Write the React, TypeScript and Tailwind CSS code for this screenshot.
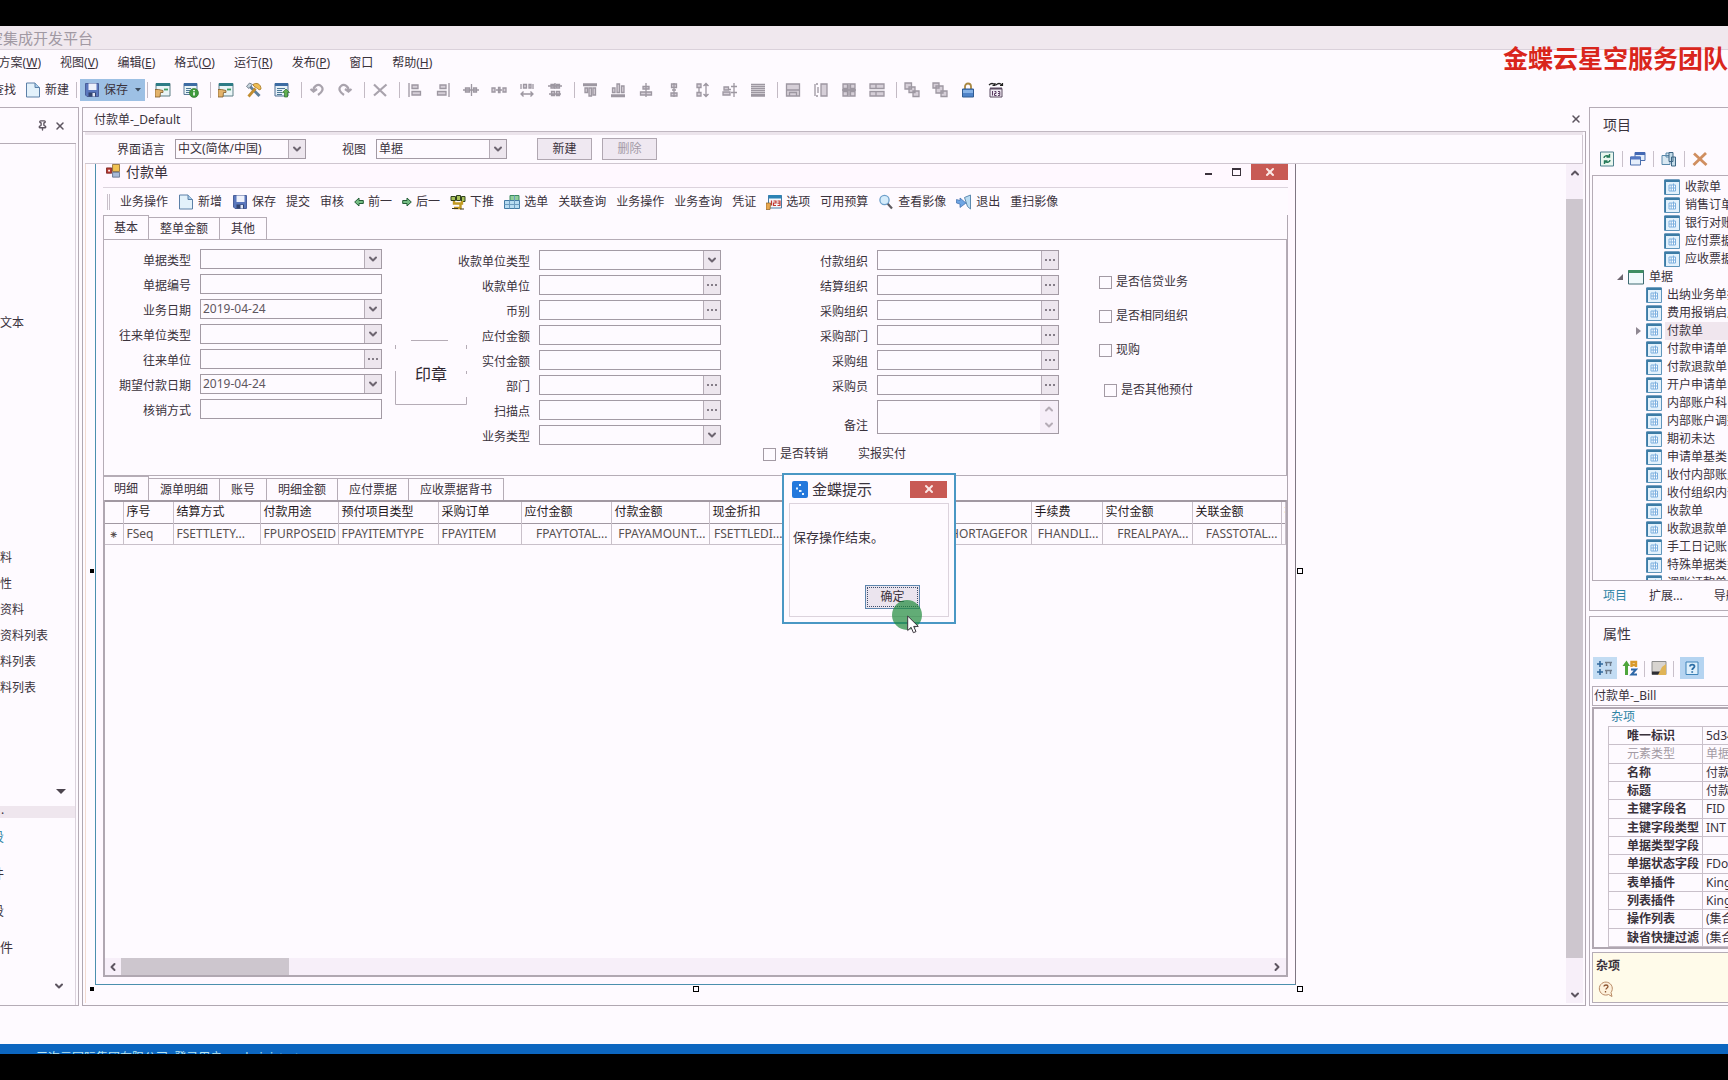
import type { ReactNode } from 'react'
import { ChevronDown, ChevronLeft, ChevronRight, ChevronUp, Pin, X } from 'lucide-react'
import clsx from 'clsx'

const FONT = "font-['Noto_Sans','Noto_Sans_CJK_SC',sans-serif]"

/* ---------- icons ---------- */

function Svg({ children, size = 16 }: { children: ReactNode; size?: number }) {
  return (
    <svg width={size} height={size} viewBox="0 0 16 16" fill="none" className="shrink-0" aria-hidden="true">
      {children}
    </svg>
  )
}

const NewIcon = () => (
  <Svg>
    <path d="M1.500 1h8.500l4.500 4.500V15h-13z" fill="#e3f1fb" stroke="#5c80a8" />
    <path d="M10 1v4.500h4.500" fill="#a9cdea" stroke="#5c80a8" />
  </Svg>
)

const SaveIcon = () => (
  <Svg>
    <path d="M1.500 1.500h13v13H3l-1.500-1.500z" fill="#5a77bd" stroke="#4a5f9a" />
    <path d="M4.500 1.500h8V8h-8z" fill="#eef1fb" />
    <path d="M4.500 10.500h7.500V14.500H4.500z" fill="#33446f" />
    <path d="M8.500 11h2.500v3.500H8.500z" fill="#dfe5f4" />
  </Svg>
)

const FormHandIcon = () => (
  <Svg>
    <path d="M1 1.500h14v12.500H1z" fill="#eaf5f7" stroke="#5f7f86" />
    <path d="M1 1h14v3H1z" fill="#2d7c86" />
    <path d="M9 7.500h4" stroke="#3e9d63" strokeWidth="1.800" />
    <path d="M0 7.500h3.500l4.500 1v2H5.500l-.5 4.500H0z" fill="#e3b36b" stroke="#7d5a2c" strokeWidth="0.800" />
  </Svg>
)

const FormInfoIcon = () => (
  <Svg>
    <path d="M1 1.500h13v11H1z" fill="#eaf5f7" stroke="#5c7a9a" />
    <path d="M1 1h13v3H1z" fill="#3d6ca3" />
    <path d="M3 6.500h5M3 8.500h4M3 10.500h4" stroke="#4b7895" />
    <circle cx="11" cy="11" r="4.500" fill="#3f9b3d" stroke="#2b7029" strokeWidth="0.600" />
    <path d="M11 8v1.200M11 10.200v3.300" stroke="#fff" strokeWidth="1.600" />
  </Svg>
)

const FormExportIcon = () => (
  <Svg>
    <path d="M1 1.500h13v12.500H1z" fill="#e6f0f8" stroke="#4f6f92" />
    <path d="M1 1h13v3H1z" fill="#3d6ca3" />
    <path d="M3 6.500h8M3 8.500h5M3 10.500h5M3 12.500h5" stroke="#4b7895" />
    <path d="M12 7l3.500 3.500H13.500V15h-3v-4.500H8.500z" fill="#62b04f" stroke="#2f7030" strokeWidth="0.700" />
  </Svg>
)

const ToolsIcon = () => (
  <Svg>
    <path d="M3 3.500l10.500 10.500" stroke="#5e7f9c" strokeWidth="3" />
    <path d="M.5 4.500L3.500 1l3 1.500-3.500 4z" fill="#c6d3dc" stroke="#5f6f7c" strokeWidth="0.800" />
    <path d="M2.500 14.500L9.500 6.500" stroke="#c28d30" strokeWidth="2.800" />
    <path d="M7 2.500c3.500-2.500 8-.5 8 4.500-1.500 1.500-2.500.5-3.500-.5S7.500 5 7 2.500z" fill="#eebd55" stroke="#a3731e" strokeWidth="0.800" />
  </Svg>
)

const BoxPushIcon = () => (
  <Svg>
    <path d="M1 2.500h4.500v4H1zM6.500 1.500h4v5h-4zM11.500 2.500H15v5h-3.500z" fill="#a9c25a" stroke="#30411f" />
    <path d="M4 7v2.500h8V7M10.500 9v5H4" stroke="#c29a22" strokeWidth="2.400" />
    <path d="M2 14.500h6M10 15h4" stroke="#40381f" />
  </Svg>
)

const PickIcon = () => (
  <Svg>
    <path d="M6 1.500h9v6H6z" fill="#8fce9a" stroke="#3c8a60" />
    <path d="M.5 6.500h15v8H.5z" fill="#b8dcf2" stroke="#447ba5" />
    <path d="M.5 10.500h15M5.500 6.500v8M10.500 1.500v13" stroke="#6d9cc0" />
  </Svg>
)

const OptionIcon = () => (
  <Svg>
    <path d="M2.500 1.500h13v12.500h-13z" fill="#f4f7fb" stroke="#4a7ba5" />
    <path d="M2.500 1h13v3.500h-13z" fill="#2c83b5" />
    <path d="M5.500 6.500v5M7.500 7H10v2H7.500v2.500H10M11.500 7h2.500v4.500h-2.500M11.500 9.200H14" stroke="#c33831" strokeWidth="1.200" />
    <path d="M0 9h4.500v2L4 15.500H0z" fill="#e8a74f" stroke="#8a5f27" strokeWidth="0.700" />
  </Svg>
)

const SearchIcon = () => (
  <Svg>
    <path d="M9.500 9.500L14 14.500" stroke="#5e5a5f" strokeWidth="2.200" />
    <circle cx="6.500" cy="6" r="4.600" fill="#d5ecfb" stroke="#6d9fca" strokeWidth="1.300" />
  </Svg>
)

const ExitIcon = () => (
  <Svg>
    <path d="M8.500 3.500l6-2.500v14l-3-2.500z" fill="#b9dcf3" stroke="#5d8ab0" />
    <path d="M.5 5.500L4 6.500V4l6 5-6 4.500V10L.5 9z" fill="#6ea5e4" stroke="#3c6cab" strokeWidth="0.700" />
  </Svg>
)

const ArrowIcon = ({ flip }: { flip?: boolean }) => (
  <svg width="10" height="12" viewBox="0 0 10 12" className={clsx('shrink-0', flip && 'rotate-180')} aria-hidden="true">
    <path d="M.7 6L5 2v2.500h4.300v3H5V10z" fill="#76bd84" stroke="#235c36" />
  </svg>
)

const FormLogo = () => (
  <svg width="14" height="14" viewBox="0 0 16 16" className="shrink-0" aria-hidden="true">
    <path d="M7.500.5h8v8h-8z" fill="#f1c252" stroke="#8c6a34" />
    <path d="M.5 4.500h6v6h-6z" fill="#b9362f" stroke="#7c2521" />
    <path d="M2.500 6.500h2v2h-2z" fill="#fff" />
    <path d="M7.500 9.500h8v5.500h-8z" fill="#a9bbd8" stroke="#60708c" />
  </svg>
)

const BillIcon = () => (
  <Svg>
    <path d="M.5 1h15v14.500H.5z" fill="#e3f1fc" stroke="#5f95bb" />
    <path d="M.5.500h15v2.500H.5zM.5 1H2v14H.5z" fill="#3c7ba5" />
    <path d="M5 6h6.500v6H5z" fill="#fff" stroke="#7db0e0" />
    <path d="M5 9h6.500M7.200 6v6M9.500 4.500V12" stroke="#7db0e0" />
  </Svg>
)

const WindowIcon = () => (
  <Svg>
    <path d="M.5 1.500h15v13.500H.5z" fill="#f0f9fb" stroke="#3f6a72" />
    <path d="M.5 1h15v3H.5z" fill="#3e8d62" />
  </Svg>
)

const LockIcon = () => (
  <Svg>
    <path d="M5 8V4.500a3 3 0 0 1 6 0V8" stroke="#a98740" strokeWidth="1.800" />
    <path d="M2.500 7h11v8h-11z" fill="#4f83c8" stroke="#315c93" />
    <path d="M3 8h10v3H3z" fill="#86b2e6" />
  </Svg>
)

const CalendarIcon = () => (
  <Svg>
    <path d="M1 3c2-2 4-2 6 0M8 3c2-2 4-2 6 0M7 1v2.500H4.500M14.500 1v2.500H12" stroke="#222" strokeWidth="1.200" />
    <path d="M2 6.500h12v8.500H2z" fill="#efe9f2" stroke="#5a4a60" />
    <path d="M2 5.500h12v2H2z" fill="#5a4a60" />
    <path d="M4.500 9v4.500M6.500 9.500H8v2H6.500v2h2M10 9.500h1.800v4H10M10 11.500h1.800" stroke="#5a3a60" />
  </Svg>
)

// 灰色布局图标,一条 path 一个
const GRAY_GROUPS: string[][] = [
  ['M1.500 7l3 2.500L8 7M4.500 9C4 4 9 1.500 12 4s1.500 6-3 9', 'M14.500 7l-3 2.500L8 7M11.500 9C12 4 7 1.500 4 4s-1.500 6 3 9'],
  ['M2 2.500L14 14M14.500 2.500L2 13.500'],
  [
    'M2 1v14M5 3h6v3.500H5zM5 9.500h8.500V13H5z',
    'M14 1v14M5 3h6v3.500H5zM2.500 9.500H11V13H2.500z',
    'M0 8h16M2.500 6h4v4h-4zM8.500 2v12M10.500 6h3v4h-3z',
    'M1 6h3v4H1zM5 8h6M12 6h3v4h-3zM7.500 5.500h1.500v5H7.500z',
    'M2 2v5M4.500 2.500h3V6h-3zM14 2v5M10 2.500h2V6h-2zM2 12h12M4.500 9.500L2 12l2.500 2.500M11.500 9.500L14 12l-2.500 2.500',
    'M4 2.500h3V6H4zM9.500 2.500h3V6h-3zM8 1v6M1 4h14M2 12h12M4.500 9.500h3v4h-3zM9.500 9.500h3v4h-3z',
  ],
  [
    'M1 2h14M1 3.500h14M3 6h2.500v4.500H3zM7 6h2.500v8H7zM11 6h2.500v7H11z',
    'M1 13h14M1 14.500h14M2.500 6H5v4.500H2.500zM7 2h2.500v8.500H7zM11.500 4H14v6.500h-2.500z',
    'M8 1v14M5 4.500h6V7H5zM2.500 10h11v3h-11z',
    'M8 1v14M5.500 2h5v3.500h-5zM5 11h6v3H5zM6 8h4',
    'M3 2h4v3.500H3zM5 5.500V11M3 10.500h4V14H3zM12 1v14M9.500 4L12 1.500 14.500 4M9.500 12l2.500 2.500 2.500-2.500',
    'M2 5h4.500v3H2zM1 10h7v3H1zM12 1v14M9 4.500h6M9 10.500h6M7 7.500h2',
    'M1 2.500h14M1 4.500h14M1 6.500h14M1 8.500h14M1 10.500h14M1 12.500h14M1 14h14',
  ],
  [
    'M1.500 2h13v12h-13zM1.500 8h13M4.500 14v-3.500h7V14',
    'M3 2h2M3 14h2M2 2v12M8 2h6v12H8zM5 5v6',
    'M2 2h4.500v4.500H2zM9.500 2H14v4.500H9.500zM2 9.500h4.500V14H2zM9.500 9.500H14V14H9.500zM8 1v14M1 8h14',
    'M1 2h14v4.500H1zM1 9.500h14V14H1zM7 2v4.500M7 9.500V14',
  ],
  ['M1 1h6.500v6H1zM5 5h6v5.500H5zM9 9h6v5.500H9z', 'M1 1h6v5H1zM4 4h7v7H4zM9 9h6v5.500H9z'],
]

function GrayIcon({ d }: { d: string }) {
  return (
    <Svg>
      <path d={d} fill="#d6cfd8" stroke="#9d97a1" strokeWidth="1.300" />
    </Svg>
  )
}

/* ---------- shared bits ---------- */

function ToolCell({ children, label }: { children: ReactNode; label: string }) {
  return (
    <button type="button" aria-label={label} className="flex h-6 w-7 shrink-0 items-center justify-center">
      {children}
    </button>
  )
}

const ToolSep = () => <span className="ml-[5px] mr-px h-4 w-px shrink-0 bg-[#c3bac4]" />

type FieldKind = 'text' | 'select' | 'lookup' | 'date'
type FieldDef = { label: string; kind: FieldKind; value?: string }

const BOX = 'flex h-5 shrink-0 border border-[#a39aa4] bg-[#fefaff]'
const ADDON = 'flex w-[17px] shrink-0 items-center justify-center border-l border-[#b5acb6] bg-[#ede6ee] text-[#6d6570]'

function Field({ id, field }: { id: string; field: FieldDef }) {
  const { label, kind, value } = field
  return (
    <div className="flex gap-[9px]">
      <label htmlFor={id} className="flex min-w-0 flex-1 items-end justify-end whitespace-nowrap leading-4">
        {label}
      </label>
      <div className={clsx(BOX, 'w-[182px]')}>
        {kind === 'select' ? (
          <select id={id} className="min-w-0 flex-1 appearance-none bg-transparent px-0.5 outline-none" />
        ) : (
          <input id={id} defaultValue={value} className="min-w-0 flex-1 bg-transparent px-0.5 text-[#5e5660] outline-none" />
        )}
        {(kind === 'select' || kind === 'date') && (
          <span className={ADDON}>
            <ChevronDown size={12} strokeWidth={4} />
          </span>
        )}
        {kind === 'lookup' && (
          <button type="button" aria-label={`选择${label}`} className={ADDON}>
            <span className="flex gap-0.5">
              <i className="size-0.5 bg-[#857d88]" />
              <i className="size-0.5 bg-[#857d88]" />
              <i className="size-0.5 bg-[#857d88]" />
            </span>
          </button>
        )}
      </div>
    </div>
  )
}

function Check({ label }: { label: string }) {
  return (
    <label className="flex h-4 items-center gap-1 whitespace-nowrap">
      <input type="checkbox" className="size-[13px] appearance-none border border-[#a39aa4] bg-[#fefaff]" />
      {label}
    </label>
  )
}

function Tabs({ items }: { items: string[] }) {
  return (
    <div role="tablist" className="flex h-6 items-end">
      {items.map((item, i) => (
        <button
          key={item}
          type="button"
          role="tab"
          aria-selected={i === 0}
          className={clsx(
            'border-r border-t border-[#b5acb6] leading-5',
            i === 0 ? 'h-6 border-l border-l-[#b5acb6] px-2.5' : 'h-[22px] px-[11px]',
          )}
        >
          {item}
        </button>
      ))}
    </div>
  )
}

/* ---------- top bars ---------- */

const MENUS = [
  ['视图', 'V'],
  ['编辑', 'E'],
  ['格式', 'O'],
  ['运行', 'R'],
  ['发布', 'P'],
  ['窗口', ''],
  ['帮助', 'H'],
]

function MenuBar() {
  return (
    <nav className="flex h-[25px] items-center gap-[19px] whitespace-nowrap">
      <button type="button" className="flex w-[41px] justify-end overflow-hidden">
        <span>解决方案(<u>W</u>)</span>
      </button>
      {MENUS.map(([name, key]) => (
        <button key={name} type="button">
          {name}
          {key && <>(<u>{key}</u>)</>}
        </button>
      ))}
    </nav>
  )
}

function MainToolbar() {
  return (
    <div className="flex h-[30px] items-center whitespace-nowrap">
      <button type="button" className="flex w-4 justify-end overflow-hidden">
        <span>查找</span>
      </button>
      <button type="button" className="ml-[9px] flex items-center gap-1">
        <NewIcon />
        新建
      </button>
      <span className="ml-[7px] mr-[3px] h-4 w-px bg-[#c3bac4]" />
      <button type="button" className="flex h-[22px] items-center gap-1 bg-[#9dc0e4] pl-1 pr-px">
        <SaveIcon />
        保存
        <svg width="6" height="4" className="mx-[3px]" aria-hidden="true">
          <path d="M0 0h6L3 3.500z" fill="#3b4a5c" />
        </svg>
      </button>
      <span className="ml-0.5 mr-px h-4 w-px bg-[#c3bac4]" />
      <ToolCell label="表单"><FormHandIcon /></ToolCell>
      <ToolCell label="信息"><FormInfoIcon /></ToolCell>
      <ToolSep />
      <ToolCell label="设计"><FormHandIcon /></ToolCell>
      <ToolCell label="工具"><ToolsIcon /></ToolCell>
      <ToolCell label="导出"><FormExportIcon /></ToolCell>
      {GRAY_GROUPS.map((group, g) => (
        <div key={g} className="flex items-center">
          <ToolSep />
          {group.map((d, i) => (
            <ToolCell key={i} label={`布局 ${g + 1}-${i + 1}`}>
              {g < 2 ? (
                <Svg>
                  <path d={d} stroke="#a9a3ad" strokeWidth="2.200" />
                </Svg>
              ) : (
                <GrayIcon d={d} />
              )}
            </ToolCell>
          ))}
        </div>
      ))}
      <ToolCell label="锁定"><LockIcon /></ToolCell>
      <ToolCell label="顺序"><CalendarIcon /></ToolCell>
    </div>
  )
}

/* ---------- left ---------- */

const TOOLBOX = ['料', '性', '资料', '资料列表', '料列表', '料列表']
const TOOL_GROUPS = ['字段', '控件', '字段']

function LeftPanel() {
  return (
    <aside className="flex w-[79px] shrink-0 flex-col border-b border-r border-t border-[#b5acb6] pr-0.5">
      <div className="flex h-9 items-center justify-end gap-1.5 border-b border-[#b5acb6] pr-2.5 text-[#5d5560]">
        <Pin size={11} strokeWidth={3} />
        <X size={12} strokeWidth={3} />
      </div>
      <div className="flex min-h-0 flex-1 flex-col border-r border-[#dcd3dd]">
        <p className="mt-[166px] leading-[26px]">文本</p>
        <ul className="mt-[209px] leading-[26px]">
          {TOOLBOX.map((t, i) => (
            <li key={i}>{t}</li>
          ))}
        </ul>
        <svg width="10" height="6" className="mb-[11px] ml-[56px] mt-auto shrink-0" aria-hidden="true">
          <path d="M0 0h10L5 5z" fill="#4c444e" />
        </svg>
        <div className="h-3 shrink-0 bg-[#efe6ee] pl-px leading-[8px]">.</div>
        <ul className="text-[13px] leading-[37px]">
          {TOOL_GROUPS.map((t, i) => (
            <li key={i} className={clsx('flex w-1 justify-end overflow-hidden whitespace-nowrap', i === 0 && 'text-[#2d83a3]')}>
              <span>{t}</span>
            </li>
          ))}
          <li>件</li>
        </ul>
        <div className="flex h-[39px] shrink-0 items-center pl-[53px] text-[#5d5560]">
          <ChevronDown size={12} strokeWidth={4} />
        </div>
      </div>
    </aside>
  )
}

/* ---------- bill designer ---------- */

type BillAction = { text: string; icon?: ReactNode }

const BILL_ACTIONS: BillAction[] = [
  { text: '业务操作' },
  { text: '新增', icon: <NewIcon /> },
  { text: '保存', icon: <SaveIcon /> },
  { text: '提交' },
  { text: '审核' },
  { text: '前一', icon: <ArrowIcon /> },
  { text: '后一', icon: <ArrowIcon flip /> },
  { text: '下推', icon: <BoxPushIcon /> },
  { text: '选单', icon: <PickIcon /> },
  { text: '关联查询' },
  { text: '业务操作' },
  { text: '业务查询' },
  { text: '凭证' },
  { text: '选项', icon: <OptionIcon /> },
  { text: '可用预算' },
  { text: '查看影像', icon: <SearchIcon /> },
  { text: '退出', icon: <ExitIcon /> },
  { text: '重扫影像' },
]

const COL1: FieldDef[] = [
  { label: '单据类型', kind: 'select' },
  { label: '单据编号', kind: 'text' },
  { label: '业务日期', kind: 'date', value: '2019-04-24' },
  { label: '往来单位类型', kind: 'select' },
  { label: '往来单位', kind: 'lookup' },
  { label: '期望付款日期', kind: 'date', value: '2019-04-24' },
  { label: '核销方式', kind: 'text' },
]

const COL2: FieldDef[] = [
  { label: '收款单位类型', kind: 'select' },
  { label: '收款单位', kind: 'lookup' },
  { label: '币别', kind: 'lookup' },
  { label: '应付金额', kind: 'text' },
  { label: '实付金额', kind: 'text' },
  { label: '部门', kind: 'lookup' },
  { label: '扫描点', kind: 'lookup' },
  { label: '业务类型', kind: 'select' },
]

const COL3: FieldDef[] = [
  { label: '付款组织', kind: 'lookup' },
  { label: '结算组织', kind: 'lookup' },
  { label: '采购组织', kind: 'lookup' },
  { label: '采购部门', kind: 'lookup' },
  { label: '采购组', kind: 'lookup' },
  { label: '采购员', kind: 'lookup' },
]

function BillForm() {
  return (
    <div className="flex h-[237px] shrink-0 border border-[#b5acb6]">
      <div className="flex w-[278px] flex-col gap-[5px] pt-[9px]">
        {COL1.map((f, i) => (
          <Field key={f.label} id={`base-${i}`} field={f} />
        ))}
      </div>
      <svg width="73" height="66" viewBox="0 0 73 66" className="ml-[13px] mt-[100px]" aria-hidden="true">
        <path d="M16 .5h37M.5 5v4M.5 31v33.500h71V57M71.500 5v4M71.500 31v3" stroke="#b5acb6" fill="none" />
        <text x="36" y="40" textAnchor="middle" fontSize="16" fill="#2e262f">印章</text>
      </svg>
      <div className="flex w-[253px] flex-col gap-[5px] pt-2.5">
        {COL2.map((f, i) => (
          <Field key={f.label} id={`payee-${i}`} field={f} />
        ))}
      </div>
      <div className="flex w-[338px] flex-col gap-[5px] pt-2.5">
        {COL3.map((f, i) => (
          <Field key={f.label} id={`org-${i}`} field={f} />
        ))}
        <div className="flex gap-[9px]">
          <label htmlFor="remark" className="flex flex-1 items-end justify-end leading-4">备注</label>
          <div className="flex h-[34px] w-[182px] border border-[#a39aa4]">
            <textarea id="remark" className="min-w-0 flex-1 resize-none bg-transparent outline-none" />
            <span className="flex w-[18px] flex-col items-center justify-between bg-[#f6eef8] py-0.5 text-[#b5acb6]">
              <ChevronUp size={12} strokeWidth={4} />
              <ChevronDown size={12} strokeWidth={4} />
            </span>
          </div>
        </div>
        <div className="mt-[7px] flex gap-[30px] pl-[42px]">
          <Check label="是否转销" />
          <span className="leading-4">实报实付</span>
        </div>
      </div>
      <div className="flex flex-col gap-[18px] pl-10 pt-[34px]">
        <Check label="是否信贷业务" />
        <Check label="是否相同组织" />
        <Check label="现购" />
        <div className="pl-[5px] pt-1.5">
          <Check label="是否其他预付" />
        </div>
      </div>
    </div>
  )
}

type Column = { title: string; field: string; width: string; right?: boolean }

const COLUMNS: Column[] = [
  { title: '序号', field: 'FSeq', width: 'w-[50px]' },
  { title: '结算方式', field: 'FSETTLETY...', width: 'w-[87px]' },
  { title: '付款用途', field: 'FPURPOSEID', width: 'w-[78px]' },
  { title: '预付项目类型', field: 'FPAYITEMTYPE', width: 'w-[100px]' },
  { title: '采购订单', field: 'FPAYITEM', width: 'w-[83px]' },
  { title: '应付金额', field: 'FPAYTOTAL...', width: 'w-[90px]', right: true },
  { title: '付款金额', field: 'FPAYAMOUNT...', width: 'w-[98px]', right: true },
  { title: '现金折扣', field: 'FSETTLEDI...', width: 'w-[77px]', right: true },
  { title: '折后金额', field: 'FDISCOUNT', width: 'w-[124px]', right: true },
  { title: '长短款', field: 'FSHORTAGEFOR', width: 'w-[121px]', right: true },
  { title: '手续费', field: 'FHANDLI...', width: 'w-[71px]', right: true },
  { title: '实付金额', field: 'FREALPAYA...', width: 'w-[90px]', right: true },
  { title: '关联金额', field: 'FASSTOTAL...', width: 'w-[89px]', right: true },
  { title: '折', field: 'F', width: 'w-auto' },
]

function DetailGrid() {
  return (
    <table className="w-full table-fixed border-collapse border-t-2 border-t-[#a198a2]">
      <thead>
        <tr className="h-[22px] border-b border-[#a198a2] text-left text-[#1f1820]">
          <th className="w-[18px] border-r border-[#c9c0ca]" />
          {COLUMNS.map((c) => (
            <th
              key={c.title}
              className={clsx('overflow-hidden whitespace-nowrap border-r border-[#c9c0ca] p-0 pl-[3px] font-normal', c.width)}
            >
              {c.title}
            </th>
          ))}
        </tr>
      </thead>
      <tbody>
        <tr className="h-[21px] border-b border-[#c9c0ca] text-[#57504f]">
          <td className="border-r border-[#c9c0ca] p-0 text-center">⁕</td>
          {COLUMNS.map((c) => (
            <td
              key={c.title}
              className={clsx(
                'overflow-hidden whitespace-nowrap border-r border-[#c9c0ca] p-0',
                c.right ? 'pr-[3px] text-right' : 'pl-[3px]',
              )}
            >
              {c.field}
            </td>
          ))}
        </tr>
      </tbody>
    </table>
  )
}

function MessageDialog() {
  return (
    <div
      role="dialog"
      aria-label="金蝶提示"
      className="absolute left-[686px] top-[309px] flex h-[151px] w-[174px] flex-col border-2 border-[#4a97c4] bg-[#fefaff] px-[5px] pb-[5px]"
    >
      <div className="flex h-7 shrink-0 items-center pl-[3px] pr-0.5 text-[15px]">
        <svg width="16" height="17" viewBox="0 0 16 17" className="mr-1 shrink-0" aria-hidden="true">
          <rect width="16" height="17" rx="2" fill="#2478dc" />
          <path d="M7 3h2v2H7zM4 6.500h2v2H4zM7 9h2.500v2H7zM10 12h2v2h-2z" fill="#e6f3ff" />
        </svg>
        <span className="flex-1">金蝶提示</span>
        <button type="button" aria-label="关闭" className="flex h-[17px] w-[37px] items-center justify-center bg-[#c85a54] text-[#fbe7e5]">
          <X size={12} strokeWidth={4} />
        </button>
      </div>
      <div className="relative flex flex-1 flex-col border border-[#dcd3dd]">
        <p className="pl-[3px] pt-[25px] text-[13px] leading-4">保存操作结束。</p>
        <button
          type="button"
          className="ml-[75px] mt-10 h-6 w-[55px] border border-[#5e86ae] bg-[#ebe4ee] p-px"
        >
          <span className="flex h-full items-center justify-center border border-dotted border-[#3f4f6c]">确定</span>
        </button>
        <span className="absolute left-[102px] top-[96px] size-[30px] rounded-full bg-[#1f8a3c]/70" />
        <svg width="14" height="20" viewBox="0 0 14 20" className="absolute left-[117px] top-[111px]" aria-hidden="true">
          <path d="M.7 1v14.500l3.400-3.200 2.300 5.400 2.600-1.100-2.300-5.200h4.600z" fill="#fff" stroke="#3a333c" />
        </svg>
      </div>
    </div>
  )
}

const HANDLE = 'absolute size-1.5 border border-black'
const HANDLE_FIXED = 'absolute size-1 bg-black'

function BillWindow() {
  return (
    <div className="relative mb-[18px] ml-[9px] flex min-w-0 flex-1 flex-col border-b border-l border-r border-b-[#4b8fae] border-l-[#4b8fae] border-r-[#7f7682] bg-[#fff8ff] px-[7px] pb-[7px]">
      <div className="flex h-[23px] shrink-0 items-start pl-[3px] leading-4">
        <FormLogo />
        <span className="ml-1.5 flex-1 text-[14px]">付款单</span>
        <button type="button" aria-label="最小化" className="mr-5 mt-[9px] h-0.5 w-[7px] bg-[#3b333c]" />
        <button type="button" aria-label="最大化" className="mr-2.5 mt-1 h-2 w-[9px] border border-t-2 border-[#3b333c]" />
        <button type="button" aria-label="关闭" className="flex h-4 w-[37px] items-center justify-center bg-[#c85a54] text-[#fbe7e5]">
          <X size={12} strokeWidth={4} />
        </button>
      </div>
      <div className="flex h-7 shrink-0 items-center gap-2.5 whitespace-nowrap border-t border-[#dcd3dd] bg-[#fefaff] pl-1">
        <span className="h-4 w-[3px] border-x border-[#c9c0ca]" />
        {BILL_ACTIONS.map((a, i) => (
          <button key={i} type="button" className="flex items-center gap-1">
            {a.icon}
            {a.text}
          </button>
        ))}
      </div>
      <div className="flex min-h-0 flex-1 flex-col border-b-2 border-r border-[#b0a7b1] bg-[#fefaff]">
        <Tabs items={['基本', '整单金额', '其他']} />
        <BillForm />
        <Tabs items={['明细', '源单明细', '账号', '明细金额', '应付票据', '应收票据背书']} />
        <div className="flex min-h-0 flex-1 flex-col border-l-2 border-r border-[#b0a7b1]">
          <DetailGrid />
          <div className="mt-auto flex h-[17px] items-center bg-[#f7eff9] text-[#5d5560]">
            <ChevronLeft size={12} strokeWidth={4} className="mx-[2px] shrink-0" />
            <div className="h-full w-[168px] bg-[#cdc6ce]" />
            <ChevronRight size={12} strokeWidth={4} className="ml-auto mr-[3px]" />
          </div>
        </div>
      </div>
      <MessageDialog />
      <span className={clsx(HANDLE_FIXED, '-left-[6px] top-[405px]')} />
      <span className={clsx(HANDLE_FIXED, '-bottom-[7px] -left-[6px]')} />
      <span className={clsx(HANDLE, '-bottom-[8px] left-1/2 -translate-x-1/2')} />
      <span className={clsx(HANDLE, '-right-[8px] top-[404px]')} />
      <span className={clsx(HANDLE, '-bottom-[8px] -right-[8px]')} />
    </div>
  )
}

function TopSelect({ id, label, value, className }: { id: string; label: string; value: string; className: string }) {
  return (
    <div className="flex items-center gap-2.5">
      <label htmlFor={id} className="pt-0.5">{label}</label>
      <div className={clsx(BOX, className)}>
        <select id={id} defaultValue={value} className="min-w-0 flex-1 appearance-none bg-transparent px-0.5 outline-none">
          <option>{value}</option>
        </select>
        <span className={ADDON}>
          <ChevronDown size={12} strokeWidth={4} />
        </span>
      </div>
    </div>
  )
}

function DocumentArea() {
  return (
    <main className="ml-[3px] flex min-w-0 flex-1 flex-col">
      <div className="flex h-6 shrink-0 items-center">
        <button type="button" className="h-6 border-l border-r border-t border-[#b5acb6] px-[11px]">
          付款单-_Default
        </button>
        <button type="button" aria-label="关闭文档" className="ml-auto mr-1 text-[#5d5560]">
          <X size={12} strokeWidth={3} />
        </button>
      </div>
      <div className="flex min-h-0 flex-1 flex-col border border-[#b0a7b1] border-t-[#c0b7c1] px-0.5 pb-0.5">
        <div className="h-[3px] shrink-0 bg-[#ece4ec]" />
        <div className="flex h-[29px] shrink-0 items-center border-b border-r border-[#cfc6d0] pl-8">
          <TopSelect id="lang" label="界面语言" value="中文(简体/中国)" className="w-[131px]" />
          <div className="ml-9">
            <TopSelect id="view" label="视图" value="单据" className="w-[131px]" />
          </div>
          <button type="button" className="ml-[30px] h-[22px] w-[55px] border border-[#b0a7b1] bg-[#efe8f1]">新建</button>
          <button type="button" disabled className="ml-2.5 h-[22px] w-[55px] border border-[#b0a7b1] bg-[#efe8f1] text-[#a39aa6]">
            删除
          </button>
        </div>
        <div className="flex min-h-0 flex-1 border-l border-[#f3dcd2]">
          <BillWindow />
          <div className="w-[270px] shrink-0" />
          <div className="flex w-[17px] shrink-0 flex-col items-center bg-[#f7eff9] text-[#5d5560]">
            <ChevronUp size={12} strokeWidth={4} className="my-[3px] shrink-0" />
            <div className="mt-[17px] w-full flex-1 bg-[#cdc6ce]" />
            <ChevronDown size={12} strokeWidth={4} className="mb-0.5 mt-[31px] shrink-0" />
          </div>
        </div>
      </div>
    </main>
  )
}

/* ---------- right ---------- */

const TREE_TOP = ['收款单', '销售订单', '银行对账单', '应付票据', '应收票据']
const TREE_BILLS = [
  '出纳业务单据', '费用报销启用', '付款单', '付款申请单', '付款退款单', '开户申请单', '内部账户科目', '内部账户调整',
  '期初未达', '申请单基类', '收付内部账户', '收付组织内部', '收款单', '收款退款单', '手工日记账', '特殊单据类型', '调账证款单',
]

function ProjectPanel() {
  return (
    <section className="flex h-[504px] flex-col overflow-hidden border-b border-l border-t border-[#b5acb6] pl-0.5 whitespace-nowrap">
      <h2 className="h-[35px] shrink-0 pl-[11px] text-[14px] leading-[33px]">项目</h2>
      <div className="flex h-8 shrink-0 items-center pl-[7px]">
        <Svg>
          <path d="M1.500 1h13v14h-13z" fill="#eaf7ef" stroke="#4d7f8c" />
          <path d="M5 7c0-2 3-3 5-1.500M10.500 3v3h-3M11 9c0 2-3 3-5 1.500M5.500 13v-3h3" stroke="#267a58" strokeWidth="1.400" />
        </Svg>
        <span className="mx-[7px] h-4 w-px bg-[#c9c0ca]" />
        <Svg>
          <path d="M5 1.500h10v8H5z" fill="#e5eefb" stroke="#4b6fae" />
          <path d="M5 1h10v3H5z" fill="#4368b4" />
          <path d="M.5 6h10v8H.5z" fill="#e5eefb" stroke="#4b6fae" />
          <path d="M.5 5.500h10v3H.5z" fill="#5478c4" />
        </Svg>
        <span className="mx-[7px] h-4 w-px bg-[#c9c0ca]" />
        <Svg>
          <path d="M1 4.500h8v9H1zM5 2h4v4H5z" fill="#d9e8f2" stroke="#5a88aa" />
          <path d="M8 1.500h4v9H8zM10.500 6h4v9h-4z" fill="#c4dbe8" stroke="#3e6685" />
        </Svg>
        <span className="mx-[7px] h-4 w-px bg-[#c9c0ca]" />
        <Svg>
          <path d="M2 2.500L14.500 14M14 2L1.500 14" stroke="#d08f60" strokeWidth="2.800" />
        </Svg>
      </div>
      <ul className="min-h-0 flex-1 overflow-hidden border-l border-t border-[#b5acb6] pt-0.5">
        {TREE_TOP.map((t) => (
          <li key={t} className="flex h-[18px] items-center gap-[5px] pl-[71px]">
            <BillIcon />
            {t}
          </li>
        ))}
        <li className="flex h-[18px] items-center gap-[5px] pl-[24px]">
          <svg width="6" height="6" className="shrink-0" aria-hidden="true">
            <path d="M6 0v6H0z" fill="#6d6570" />
          </svg>
          <WindowIcon />
          单据
        </li>
        {TREE_BILLS.map((t) => {
          const selected = t === '付款单'
          return (
            <li key={t} className="flex h-[18px] items-center pl-[43px]">
              <span className="flex w-2.5 shrink-0">
                {selected && (
                  <svg width="5" height="8" aria-hidden="true">
                    <path d="M0 0l5 4-5 4z" fill="#8f8792" />
                  </svg>
                )}
              </span>
              <BillIcon />
              <span className={clsx('ml-[3px] flex-1 pl-0.5 leading-[18px]', selected && 'bg-[#f0e6ee]')}>{t}</span>
            </li>
          )
        })}
      </ul>
      <div className="flex h-[30px] shrink-0 items-center border-t border-[#b5acb6] pl-[11px]">
        <button type="button" className="text-[#2d83a3]">项目</button>
        <span className="mx-[11px] h-6 w-px bg-[#d8cfd9]" />
        <button type="button">扩展...</button>
        <span className="ml-5 mr-[11px] h-6 w-px bg-[#d8cfd9]" />
        <button type="button">导航</button>
      </div>
    </section>
  )
}

const PROPS: [string, string][] = [
  ['唯一标识', '5d34'],
  ['元素类型', '单据'],
  ['名称', '付款单'],
  ['标题', '付款单'],
  ['主键字段名', 'FID'],
  ['主键字段类型', 'INT'],
  ['单据类型字段', ''],
  ['单据状态字段', 'FDocument'],
  ['表单插件', 'Kingdee'],
  ['列表插件', 'Kingdee'],
  ['操作列表', '(集合)'],
  ['缺省快捷过滤', '(集合)'],
]

function PropertyPanel() {
  return (
    <section className="mt-[5px] flex min-h-0 flex-1 flex-col overflow-hidden border-b border-l border-t border-[#b5acb6] pb-0.5 pl-0.5 whitespace-nowrap">
      <h2 className="h-10 shrink-0 pl-[11px] text-[14px] leading-[33px]">属性</h2>
      <div className="flex h-[29px] shrink-0 items-start pl-px">
        <button type="button" aria-label="分类" className="flex h-[22px] w-6 items-center justify-center bg-[#c3dcf3]">
          <Svg>
            <path d="M0 4h6M3 1v6M0 12h6M3 9v6" stroke="#31679c" strokeWidth="1.600" />
            <path d="M8 2.500h7M9.500 2v4M13.500 2v4M8 10.500h7M9.500 10v4M13.500 10v4" stroke="#6d7b8c" strokeWidth="1.400" />
          </Svg>
        </button>
        <button type="button" aria-label="排序" className="ml-[5px] flex h-[22px] items-center">
          <Svg>
            <path d="M3 15V6H.5L4.500.5 8 6H6v9z" fill="#4ea53c" />
            <path d="M9.500 7V2h4.500v5M9.500 5H14" stroke="#d99a2b" strokeWidth="2.400" />
            <path d="M9 9.500h5L9.500 14.500H15" stroke="#2e68a8" strokeWidth="2" />
          </Svg>
        </button>
        <span className="mx-1.5 mt-1 h-4 w-px bg-[#c9c0ca]" />
        <button type="button" aria-label="属性页" className="flex h-[22px] items-center">
          <Svg>
            <path d="M1 1.500h14v13H1z" fill="#d8d4d0" stroke="#8c8c8c" />
            <path d="M1 11.500h14v3H1z" fill="#2e2e34" />
            <path d="M7 15l4-8 4-3v11z" fill="#e0b457" />
          </Svg>
        </button>
        <span className="mx-1.5 mt-1 h-4 w-px bg-[#c9c0ca]" />
        <button type="button" aria-label="帮助" className="flex h-[22px] w-6 items-center justify-center bg-[#b5d4f1]">
          <Svg>
            <path d="M2 2h12v12.500H2z" fill="#dff0fc" stroke="#3f83b8" />
            <path d="M6 6.500C6 4 10.500 4 10.500 6.500 10.500 8 8.200 8 8.200 10M8.200 11.200v1.600" stroke="#2c6ea6" strokeWidth="1.800" />
          </Svg>
        </button>
      </div>
      <select aria-label="对象" className="h-5 w-full shrink-0 appearance-none border border-r-0 border-[#b5acb6] bg-transparent px-px">
        <option>付款单-_Bill</option>
      </select>
      <div className="mt-px flex min-h-0 flex-1 flex-col overflow-hidden border-2 border-r-0 border-[#b0a7b1] pl-3.5">
        <div className="h-[17px] shrink-0 pl-[3px] leading-[16px] text-[#2d83a3]">杂项</div>
        <table className="h-[225px] w-full table-fixed border-collapse border-l border-t border-[#c9c0ca]">
          <tbody>
            {PROPS.map(([name, value]) => (
              <tr key={name} className="border-b border-[#c9c0ca]">
                <th
                  className={clsx(
                    'w-[94px] overflow-hidden border-r border-[#c9c0ca] p-0 pl-[18px] text-left leading-[17px]',
                    name === '元素类型' ? 'font-normal text-[#a39aa4]' : 'font-bold',
                  )}
                >
                  {name}
                </th>
                <td className={clsx('overflow-hidden p-0 pl-[3px] leading-[17px]', name === '元素类型' && 'text-[#a39aa4]')}>
                  {value}
                </td>
              </tr>
            ))}
          </tbody>
        </table>
      </div>
      <div className="mt-[3px] h-[51px] shrink-0 border border-r-0 border-[#b5acb6] bg-[#fffbea] pl-[3px] pt-1">
        <p className="font-bold leading-[18px]">杂项</p>
        <div className="pl-0.5 pt-1.5">
          <Svg>
            <path d="M10.500 13.500a6.500 6.500 0 1 1 2.500-2l1 4z" fill="#fdf1dc" stroke="#b98a66" />
            <path d="M6 5.500c0-2 4-2 4 0 0 1.500-2 1.500-2 3M7.500 10v1.500" stroke="#8c5430" strokeWidth="1.300" />
          </Svg>
        </div>
      </div>
    </section>
  )
}

export default function App() {
  return (
    <div className={clsx('flex h-screen min-h-[1000px] flex-col overflow-hidden bg-[#fefaff] text-[12px] text-[#3a323c]', FONT)}>
      <div className="h-[26px] shrink-0 bg-black" />
      <header className="relative shrink-0">
        <div className="flex h-6 border-b border-[#dad1da] bg-[#f0e8ee]">
          <h1 className="flex w-[93px] justify-end overflow-hidden whitespace-nowrap text-[15px] leading-6 text-[#a199a3]">
            <span>金蝶云星空集成开发平台</span>
          </h1>
        </div>
        <MenuBar />
        <MainToolbar />
        <div className="absolute right-0 top-[18px] text-[25px] font-bold leading-7 text-[#d9261c]">金蝶云星空服务团队</div>
      </header>
      <div className="mb-[38px] mt-0.5 flex min-h-0 flex-1">
        <LeftPanel />
        <DocumentArea />
        <div className="ml-[3px] flex w-[139px] shrink-0 flex-col">
          <ProjectPanel />
          <PropertyPanel />
        </div>
      </div>
      <footer className="h-2.5 shrink-0 overflow-hidden whitespace-nowrap bg-[#0c66c0] pl-9 pt-1.5 leading-4 text-[#b9e6f2]">
        三次元国际集团有限公司&nbsp; 登录用户：administrator
      </footer>
      <div className="h-[26px] shrink-0 bg-black" />
    </div>
  )
}
